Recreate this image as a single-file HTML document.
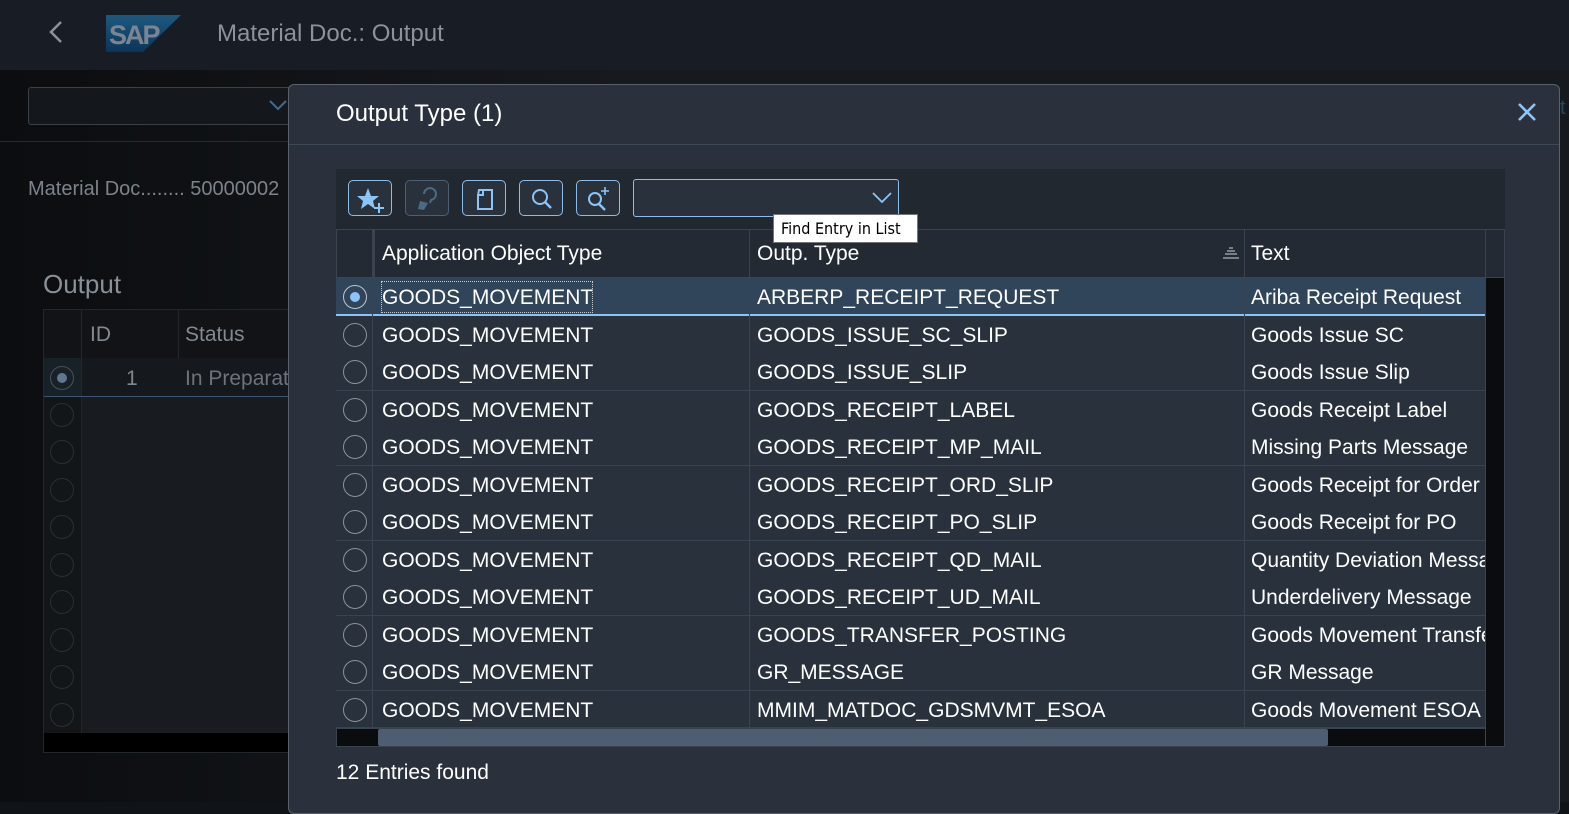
<!DOCTYPE html>
<html><head><meta charset="utf-8">
<style>
*{margin:0;padding:0;box-sizing:border-box}
body{width:1569px;height:802px;overflow:hidden;background:#101317;font-family:"Liberation Sans",Arial,sans-serif;position:relative}
.a{position:absolute}
.t{position:absolute;white-space:nowrap}
.hd{left:0;top:0;width:1569px;height:70px;background:#181d25}
.bg2{left:0;top:70px;width:1569px;height:732px;background:linear-gradient(90deg,#0b0d10 0%,#16191e 40%,#16191e 100%)}
.dlg{left:288px;top:84px;width:1272px;height:730px;background:#2a313c;border:1px solid #5a616b;border-radius:6px}
.radio{position:absolute;width:24px;height:24px;border-radius:50%;border:1.5px solid #8b929b}
.row{position:absolute;left:336px;width:1149px;height:38px;border-bottom:1px solid #3a4350;background:#29313c}
.row .t{top:8px;font-size:21px;color:#fff}
.row .t:nth-child(3){width:234px;overflow:hidden}
.btn{position:absolute;top:180px;width:44px;height:36px;border:1px solid #8cbde8;border-radius:5px;background:#29313c}
</style></head><body>
<div class="a hd"></div>
<div class="a bg2"></div>
<svg class="a" style="left:46px;top:20px" width="20" height="26"><path d="M15 2 L5 12 L15 22" stroke="#8a929c" stroke-width="2.5" fill="none"/></svg>
<svg class="a" style="left:106px;top:15px" width="75" height="37"><defs><linearGradient id="g" x1="0" y1="0" x2="0" y2="1"><stop offset="0" stop-color="#1c5a80"/><stop offset="1" stop-color="#0e3358"/></linearGradient></defs><polygon points="0,0 75,0 37,37 0,37" fill="url(#g)"/><text x="3" y="29" font-family="Liberation Sans" font-weight="bold" font-size="27" fill="#7b8591" letter-spacing="-2">SAP</text></svg>
<div class="t" style="left:217px;top:20px;font-size:24px;color:#8c9299">Material Doc.: Output</div>
<div class="a" style="left:28px;top:87px;width:270px;height:38px;border:1px solid #3a4048;border-radius:3px;background:#14181d"></div>
<svg class="a" style="left:268px;top:98px" width="20" height="14"><path d="M2 3 L10 11 L18 3" stroke="#3f6b90" stroke-width="2" fill="none"/></svg>
<div class="a" style="left:0;top:141px;width:290px;height:1px;background:#252a31"></div>
<div class="t" style="left:28px;top:178px;font-size:20px;color:#7d838a">Material Doc........ 50000002</div>
<div class="t" style="left:43px;top:269px;font-size:26px;color:#8a9097">Output</div>
<div class="a" style="left:43px;top:309px;width:250px;height:444px;border:1px solid #22272d;background:#181b20"></div>
<div class="a" style="left:44px;top:310px;width:250px;height:48px;background:#111317"></div>
<div class="a" style="left:81px;top:310px;width:1px;height:423px;background:#22272d"></div>
<div class="a" style="left:178px;top:310px;width:1px;height:87px;background:#22272d"></div>
<div class="t" style="left:90px;top:323px;font-size:21px;color:#838990">ID</div>
<div class="t" style="left:185px;top:323px;font-size:21px;color:#838990">Status</div>
<div class="a" style="left:44px;top:358px;width:37px;height:38px;background:#182028"></div>
<div class="a" style="left:82px;top:358px;width:210px;height:38px;background:#15191e"></div>
<div class="a" style="left:44px;top:396px;width:250px;height:1px;background:#3d5670"></div>
<div class="radio" style="left:50px;top:366px;border-color:#4a5058"></div><div class="a" style="left:57px;top:373px;width:10px;height:10px;border-radius:50%;background:#5f7890"></div>
<div class="t" style="left:126px;top:367px;font-size:21px;color:#80868d">1</div>
<div class="t" style="left:185px;top:367px;font-size:21px;color:#6d737a">In Preparat</div>
<div class="a" style="left:44px;top:397px;width:37px;height:336px;background:#131619"></div>
<div class="radio" style="left:50px;top:403px;border-color:#2a2f35"></div>
<div class="radio" style="left:50px;top:440px;border-color:#2a2f35"></div>
<div class="radio" style="left:50px;top:478px;border-color:#2a2f35"></div>
<div class="radio" style="left:50px;top:515px;border-color:#2a2f35"></div>
<div class="radio" style="left:50px;top:553px;border-color:#2a2f35"></div>
<div class="radio" style="left:50px;top:590px;border-color:#2a2f35"></div>
<div class="radio" style="left:50px;top:628px;border-color:#2a2f35"></div>
<div class="radio" style="left:50px;top:665px;border-color:#2a2f35"></div>
<div class="radio" style="left:50px;top:703px;border-color:#2a2f35"></div>
<div class="a" style="left:44px;top:733px;width:250px;height:19px;background:#000"></div>
<div class="t" style="left:1560px;top:97px;font-size:20px;color:#2c4660">t</div>

<div class="a dlg"></div>
<div class="a" style="left:289px;top:144px;width:1270px;height:1px;background:#3e4957"></div>
<div class="t" style="left:336px;top:100px;font-size:24px;color:#fff">Output Type (1)</div>
<svg class="a" style="left:1517px;top:102px" width="20" height="20"><path d="M2 2 L18 18 M18 2 L2 18" stroke="#8cc4f6" stroke-width="2.6"/></svg>

<div class="a" style="left:336px;top:169px;width:1169px;height:60px;background:#222830"></div>
<div class="btn" style="left:348px"><svg width="44" height="36"><path d="M19 7 L22 15 L30 15 L24 20 L26 28 L19 23 L12 28 L14 20 L8 15 L16 15Z" fill="#8cc4f6"/><path d="M30 22 V32 M25 27 H35" stroke="#8cc4f6" stroke-width="2"/></svg></div>
<div class="btn" style="left:405px;border-color:#4d6073"><svg width="44" height="36"><path d="M18 13 A6 6 0 1 1 25 19 L24 22" stroke="#4d6a85" stroke-width="2" fill="none"/><path d="M12 28 L14 20 L22 22 L18 29Z" fill="#4d6a85"/></svg></div>
<div class="btn" style="left:462px"><svg width="44" height="36"><path d="M16 9 H29 V28 H15 V14Z M16 14 H20 V9" stroke="#8cc4f6" stroke-width="2" fill="none"/></svg></div>
<div class="btn" style="left:519px"><svg width="44" height="36"><circle cx="20" cy="16" r="7" stroke="#8cc4f6" stroke-width="2" fill="none"/><path d="M25 21 L31 27" stroke="#8cc4f6" stroke-width="2.4"/></svg></div>
<div class="btn" style="left:576px"><svg width="44" height="36"><circle cx="18" cy="18" r="6" stroke="#8cc4f6" stroke-width="2" fill="none"/><path d="M22 23 L28 29" stroke="#8cc4f6" stroke-width="2.4"/><path d="M28 6 V14 M24 10 H32" stroke="#8cc4f6" stroke-width="1.6"/></svg></div>
<div class="a" style="left:633px;top:179px;width:266px;height:38px;border:1px solid #8cbde8;border-radius:3px;background:#29313c"></div>
<svg class="a" style="left:871px;top:190px" width="22" height="14"><path d="M2 3 L11 12 L20 3" stroke="#8cc4f6" stroke-width="1.8" fill="none"/></svg>

<div class="a" style="left:336px;top:229px;width:1169px;height:518px;background:#0a0c0e;border:1px solid #3a4350"></div>
<div class="a" style="left:337px;top:230px;width:1167px;height:48px;background:#232a33;border-bottom:1px solid #3a4350"></div>
<div class="a" style="left:373px;top:230px;width:2px;height:498px;background:#3a4350"></div>
<div class="t" style="left:382px;top:242px;font-size:21px;color:#fff">Application Object Type</div>
<div class="t" style="left:757px;top:242px;font-size:21px;color:#fff">Outp. Type</div>
<div class="t" style="left:1251px;top:242px;font-size:21px;color:#fff">Text</div>
<svg class="a" style="left:1222px;top:246px" width="18" height="14"><path d="M7 2 H11 M5 5 H13 M3 8 H15 M1 12 H17" stroke="#d0d4d8" stroke-width="1"/></svg>

<div class="row" style="top:278px;background:#304559;border-bottom:2px solid #8cc4f6"><div class="t" style="left:46px">GOODS_MOVEMENT</div><div class="t" style="left:421px">ARBERP_RECEIPT_REQUEST</div><div class="t" style="left:915px">Ariba Receipt Request</div></div>
<div class="a" style="left:381px;top:281px;width:212px;height:32px;border:1px dotted #c8ccd0"></div>
<div class="row" style="top:316px"><div class="t" style="left:46px">GOODS_MOVEMENT</div><div class="t" style="left:421px">GOODS_ISSUE_SC_SLIP</div><div class="t" style="left:915px">Goods Issue SC</div></div>
<div class="row" style="top:353px"><div class="t" style="left:46px">GOODS_MOVEMENT</div><div class="t" style="left:421px">GOODS_ISSUE_SLIP</div><div class="t" style="left:915px">Goods Issue Slip</div></div>
<div class="row" style="top:391px"><div class="t" style="left:46px">GOODS_MOVEMENT</div><div class="t" style="left:421px">GOODS_RECEIPT_LABEL</div><div class="t" style="left:915px">Goods Receipt Label</div></div>
<div class="row" style="top:428px"><div class="t" style="left:46px">GOODS_MOVEMENT</div><div class="t" style="left:421px">GOODS_RECEIPT_MP_MAIL</div><div class="t" style="left:915px">Missing Parts Message</div></div>
<div class="row" style="top:466px"><div class="t" style="left:46px">GOODS_MOVEMENT</div><div class="t" style="left:421px">GOODS_RECEIPT_ORD_SLIP</div><div class="t" style="left:915px">Goods Receipt for Order</div></div>
<div class="row" style="top:503px"><div class="t" style="left:46px">GOODS_MOVEMENT</div><div class="t" style="left:421px">GOODS_RECEIPT_PO_SLIP</div><div class="t" style="left:915px">Goods Receipt for PO</div></div>
<div class="row" style="top:541px"><div class="t" style="left:46px">GOODS_MOVEMENT</div><div class="t" style="left:421px">GOODS_RECEIPT_QD_MAIL</div><div class="t" style="left:915px">Quantity Deviation Message</div></div>
<div class="row" style="top:578px"><div class="t" style="left:46px">GOODS_MOVEMENT</div><div class="t" style="left:421px">GOODS_RECEIPT_UD_MAIL</div><div class="t" style="left:915px">Underdelivery Message</div></div>
<div class="row" style="top:616px"><div class="t" style="left:46px">GOODS_MOVEMENT</div><div class="t" style="left:421px">GOODS_TRANSFER_POSTING</div><div class="t" style="left:915px">Goods Movement Transfer</div></div>
<div class="row" style="top:653px"><div class="t" style="left:46px">GOODS_MOVEMENT</div><div class="t" style="left:421px">GR_MESSAGE</div><div class="t" style="left:915px">GR Message</div></div>
<div class="row" style="top:691px;height:37px"><div class="t" style="left:46px">GOODS_MOVEMENT</div><div class="t" style="left:421px">MMIM_MATDOC_GDSMVMT_ESOA</div><div class="t" style="left:915px">Goods Movement ESOA</div></div>
<div class="a" style="left:336px;top:230px;width:37px;height:498px;border-right:1px solid #3a4350"></div>
<div class="a" style="left:749px;top:230px;width:1px;height:498px;background:#3a4350"></div>
<div class="a" style="left:1244px;top:230px;width:1px;height:498px;background:#3a4350"></div>
<div class="a" style="left:1485px;top:230px;width:1px;height:517px;background:#3a4350"></div>
<div class="radio" style="left:343px;top:285px;border-color:#c0c6cc"></div><div class="a" style="left:350px;top:292px;width:10px;height:10px;border-radius:50%;background:#8cc4f6"></div>
<div class="radio" style="left:343px;top:323px"></div>
<div class="radio" style="left:343px;top:360px"></div>
<div class="radio" style="left:343px;top:398px"></div>
<div class="radio" style="left:343px;top:435px"></div>
<div class="radio" style="left:343px;top:473px"></div>
<div class="radio" style="left:343px;top:510px"></div>
<div class="radio" style="left:343px;top:548px"></div>
<div class="radio" style="left:343px;top:585px"></div>
<div class="radio" style="left:343px;top:623px"></div>
<div class="radio" style="left:343px;top:660px"></div>
<div class="radio" style="left:343px;top:698px"></div>
<div class="a" style="left:337px;top:728px;width:1148px;height:1px;background:#3a4350"></div>
<div class="a" style="left:378px;top:729px;width:950px;height:17px;background:#4e5d6f;border-radius:2px"></div>
<div class="t" style="left:336px;top:761px;font-size:21px;color:#fff">12 Entries found</div>

<div class="a" style="left:773px;top:214px;width:145px;height:29px;background:#fff;border:1px solid #767676"></div>
<div class="t" style="left:781px;top:219px;font-size:16px;color:#000;font-family:'DejaVu Sans Condensed','Liberation Sans',sans-serif">Find Entry in List</div>
</body></html>
